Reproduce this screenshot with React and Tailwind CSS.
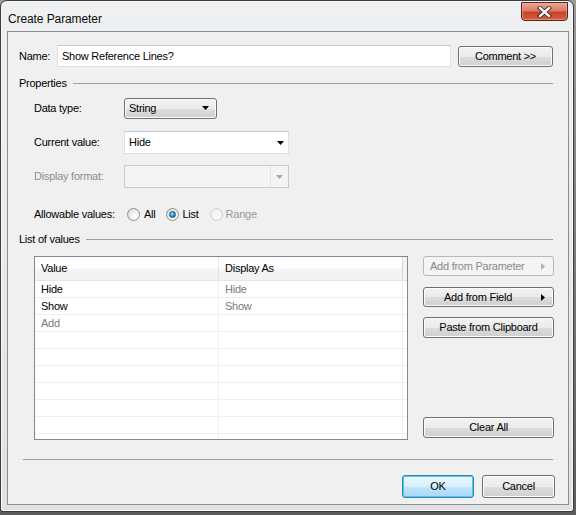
import React from "react";

const btnBase =
  "flex items-center border border-[#707070] rounded-[3px] bg-[linear-gradient(to_bottom,#f2f2f2_0%,#ebebeb_50%,#dddddd_51%,#cfcfcf_100%)] shadow-[inset_0_0_0_1px_#fbfbfb] text-[#000]";
const btn = `${btnBase} justify-center`;

function Arrow({ color = "#000", className = "" }) {
  return (
    <svg width="7" height="4" viewBox="0 0 7 4" className={className}>
      <path d="M0 0h7L3.5 4z" fill={color} />
    </svg>
  );
}

function SideArrow({ color = "#000" }) {
  return (
    <svg width="4" height="7" viewBox="0 0 4 7">
      <path d="M0 0v7l4-3.5z" fill={color} />
    </svg>
  );
}

function Radio({ checked, disabled }) {
  return (
    <span
      className={`relative flex h-[13px] w-[13px] items-center justify-center rounded-full border ${
        disabled
          ? "border-[#cfcfcf] bg-[radial-gradient(circle_at_60%_70%,#fafafa,#ececec)]"
          : "border-[#8e8f8f] bg-[radial-gradient(circle_at_65%_70%,#ffffff_10%,#e8e8e8_60%,#cfcfcf_100%)]"
      }`}
    >
      {checked && (
        <span className="h-[7px] w-[7px] rounded-full border border-[#1c5180] bg-[radial-gradient(circle_at_40%_35%,#b8e4fb_0%,#3d9bd6_45%,#12497a_100%)]" />
      )}
    </span>
  );
}

function Legend({ label }) {
  return (
    <div className="flex h-[16px] items-center pl-[11px] pr-[15px]">
      <span>{label}</span>
      <div className="ml-[6px] h-px flex-1 bg-[#a0a0a0]" />
    </div>
  );
}

const rows = [
  ["Hide", "Hide"],
  ["Show", "Show"],
  ["Add", ""],
  ["", ""],
  ["", ""],
  ["", ""],
  ["", ""],
  ["", ""],
  ["", ""],
  ["", ""],
];

export default function App() {
  return (
    <div className="h-[515px] w-[576px] overflow-hidden bg-[linear-gradient(to_bottom,#9a9a9a,#5c5c5c)] font-['Liberation_Sans',Arial,sans-serif] text-[11px] leading-none tracking-[-0.25px] text-black">
      {/* window frame */}
      <div className="h-[512px] w-[574px] rounded-t-[7px] rounded-b-[3px] border border-[#3d3d3d] bg-[linear-gradient(to_bottom,#eef0f1_0%,#e9ebec_40%,#dfe1e3_100%)] shadow-[inset_0_0_0_1px_#f8f9fa]">
        {/* title bar */}
        <div className="flex h-[30px] items-start">
          <span className="mt-[12px] ml-[7px] text-[12px] tracking-[-0.1px] text-[#0c0c0c]">Create Parameter</span>
          <div className="flex-1" />
          <div className="mt-[1px] mr-[5px] flex h-[19px] w-[47px] items-center justify-center rounded-b-[4px] border border-[#5b2016] bg-[linear-gradient(to_bottom,#e8a795_0%,#db7b64_45%,#c9432a_55%,#d35f43_100%)] shadow-[inset_0_0_0_1px_#f1b9aa80]">
            <svg width="15" height="12" viewBox="0 0 15 12">
              <path d="M3 2l9 8M12 2l-9 8" stroke="#3a2a2a" strokeWidth="4.2" strokeLinecap="square" />
              <path d="M3 2l9 8M12 2l-9 8" stroke="#f4f4f4" strokeWidth="2.4" strokeLinecap="square" />
            </svg>
          </div>
        </div>

        {/* client area */}
        <div className="ml-[6px] h-[474px] w-[562px] border border-[#8a8d91] bg-[#f0f0f0]">
          {/* name row */}
          <div className="mt-[13px] flex h-[22px] items-center pl-[11px]">
            <span className="w-[38px]">Name:</span>
            <div className="flex h-[22px] w-[394px] items-center border border-[#dcdfe3] border-t-[#c5c8cc] bg-white pl-[4px]">
              Show Reference Lines?
            </div>
            <div className={`${btn} mt-[1px] ml-[7px] h-[21px] w-[95px]`}>Comment &gt;&gt;</div>
          </div>

          <div className="mt-[8px]">
            <Legend label="Properties" />
          </div>

          {/* data type */}
          <div className="mt-[6px] flex h-[22px] items-center pl-[26px]">
            <span className="w-[90px]">Data type:</span>
            <div className={`${btnBase} h-[21px] w-[93px] justify-between pr-[7px] pl-[4px]`}>
              <span>String</span>
              <Arrow />
            </div>
          </div>

          {/* current value */}
          <div className="mt-[12px] flex h-[23px] items-center pl-[26px]">
            <span className="w-[90px]">Current value:</span>
            <div className="flex h-[23px] w-[165px] items-center justify-between border border-[#dcdfe3] border-t-[#c5c8cc] bg-white pr-[4px] pl-[4px]">
              <span>Hide</span>
              <Arrow />
            </div>
          </div>

          {/* display format (disabled) */}
          <div className="mt-[11px] flex h-[23px] items-center pl-[26px]">
            <span className="w-[90px] text-[#8d8d8d]">Display format:</span>
            <div className="flex h-[23px] w-[165px] items-stretch justify-end border border-[#c9c9c9] bg-[#f4f4f4]">
              <div className="flex w-[18px] items-center justify-center border-l border-[#e4e4e4]">
                <Arrow color="#a8a8a8" />
              </div>
            </div>
          </div>

          {/* allowable values */}
          <div className="mt-[18px] flex h-[16px] items-center pl-[26px]">
            <span className="w-[93px]">Allowable values:</span>
            <Radio />
            <span className="ml-[4px]">All</span>
            <span className="ml-[11px]">
              <Radio checked />
            </span>
            <span className="ml-[3px]">List</span>
            <span className="ml-[11px]">
              <Radio disabled />
            </span>
            <span className="ml-[3px] text-[#9a9a9a]">Range</span>
          </div>

          <div className="mt-[9px]">
            <Legend label="List of values" />
          </div>

          {/* values table + side buttons */}
          <div className="mt-[9px] flex h-[184px] pl-[26px]">
            <div className="flex h-[184px] w-[374px] flex-col overflow-hidden border border-[#828790] bg-white">
              <div className="flex h-[24px] shrink-0 border-b border-[#e5e5e5] bg-[linear-gradient(to_bottom,#ffffff_0%,#ffffff_45%,#f3f4f6_55%,#f1f2f4_100%)]">
                <div className="flex w-[184px] items-center border-r border-[#e3e5e8] pl-[6px]">Value</div>
                <div className="flex w-[184px] items-center border-r border-[#d5d7da] pl-[6px]">Display As</div>
                <div className="flex-1 bg-[#f4f4f4]" />
              </div>
              {rows.map(([v, d], i) => (
                <div key={i} className="flex h-[17px] shrink-0 border-b border-[#efefef]">
                  <div className={`flex w-[184px] items-center border-r border-[#efefef] pl-[6px] ${v === "Add" ? "text-[#7a7a7a]" : ""}`}>
                    {v}
                  </div>
                  <div className="flex w-[184px] items-center border-r border-[#efefef] pl-[6px] text-[#7a7a7a]">{d}</div>
                </div>
              ))}
            </div>

            <div className="ml-[15px] flex w-[131px] flex-col">
              <div className="flex h-[20px] items-center justify-between rounded-[3px] border border-[#b5b9bd] bg-[#f4f4f4] pr-[8px] pl-[6px] text-[#8a8a8a]">
                <span>Add from Parameter</span>
                <SideArrow color="#b0b0b0" />
              </div>
              <div className={`${btnBase} mt-[11px] h-[20px] justify-between pr-[8px] pl-[20px]`}>
                <span>Add from Field</span>
                <SideArrow />
              </div>
              <div className={`${btn} mt-[10px] h-[21px]`}>Paste from Clipboard</div>
              <div className="flex-1" />
              <div className={`${btn} mb-[2px] h-[21px]`}>Clear All</div>
            </div>
          </div>

          {/* separator */}
          <div className="mt-[19px] ml-[15px] mr-[15px] h-px bg-[#a0a0a0]" />

          {/* dialog buttons */}
          <div className="mt-[15px] flex h-[23px] justify-end pr-[13px]">
            <div className="flex h-[23px] w-[72px] items-center justify-center rounded-[3px] border border-[#3c7fb1] bg-[linear-gradient(to_bottom,#eaf6fd_0%,#d9f0fc_50%,#bee6fd_51%,#a7d9f5_100%)] shadow-[inset_0_0_0_1px_#53c6f2]">
              OK
            </div>
            <div className={`${btn} ml-[8px] h-[23px] w-[73px]`}>Cancel</div>
          </div>
        </div>
      </div>
    </div>
  );
}
